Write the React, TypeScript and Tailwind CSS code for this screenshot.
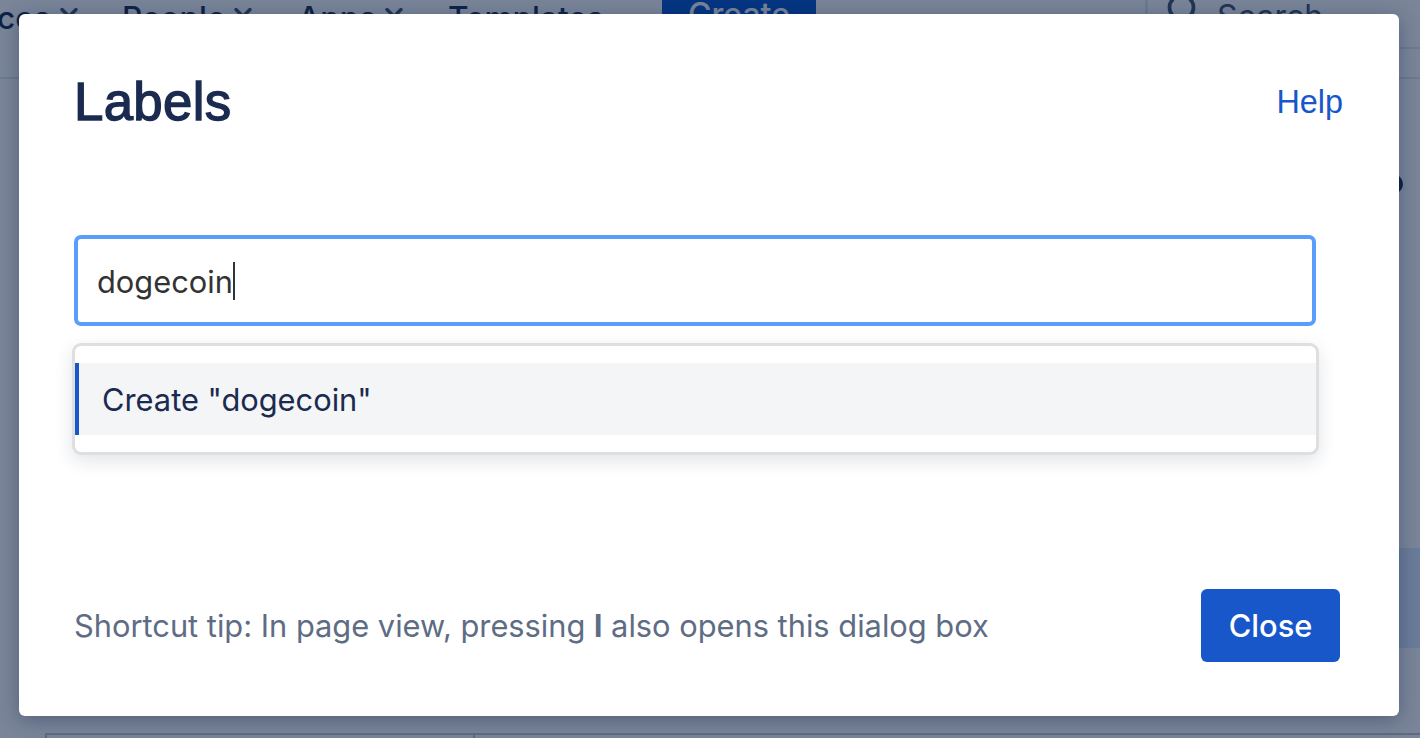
import React from 'react';
import { Search, ChevronDown } from 'lucide-react';

const inter = { fontFamily: 'Inter, sans-serif' };

function NavItem({ label, caret }: { label: string; caret?: boolean }) {
  return (
    <div className="flex items-start text-[#172b4d] text-[31.5px] leading-[40px] font-medium whitespace-nowrap">
      <span>{label}</span>
      {caret && <ChevronDown size={28} strokeWidth={3} className="text-[#42526e] mt-[1px] ml-[4px]" />}
    </div>
  );
}

// page that sits behind the dialog, only the edges are visible
function BackgroundPage() {
  return (
    <div className="h-[738px] overflow-hidden bg-white flex flex-col">
      <div className="h-[79px] shrink-0 flex items-start border-b-2 border-[#e4e6ea]">
        <div className="flex items-start w-[662px] -mt-[2px]">
          <div className="w-[125px] -ml-[3px]"><NavItem label="ces" caret /></div>
          <div className="w-[176px]"><NavItem label="People" caret /></div>
          <div className="w-[150px]"><NavItem label="Apps" caret /></div>
          <NavItem label="Templates" />
        </div>
        <div className="w-[154px] h-[14px] bg-[#0052cc] overflow-hidden text-center">
          <div className="text-white text-[32px] leading-[40px] font-medium -mt-[5px]">Create</div>
        </div>
        <div className="ml-[329px] flex-1 h-[49px] pl-[17px] border-l-[3px] border-b-2 border-[#e4e6ea] flex items-start gap-[16px] text-[#42526e] text-[32px] leading-[40px]">
          <Search size={36} strokeWidth={2.5} className="-mt-[9px]" />
          <span className="-mt-[3px]">Search</span>
        </div>
      </div>
      <div className="flex-1 flex justify-end">
        <div className="w-[37px]">
          <div className="mt-[95px] w-[20px] h-[20px] rounded-full bg-[#172b4d]" />
          <div className="mt-[354px] h-[100px] bg-[#deebff]" />
        </div>
      </div>
      <div className="h-[5px] ml-[45px] flex border-t-2 border-l-2 border-[#c1c7d0] shrink-0">
        <div className="w-[428px] border-r-2 border-[#c1c7d0]" />
      </div>
    </div>
  );
}

export default function App() {
  return (
    <div className="relative w-[1420px] h-[738px] overflow-hidden" style={inter}>
      <BackgroundPage />

      {/* Blanket */}
      <div className="absolute inset-0 bg-[#091e42]/[0.54]" />

      {/* Dialog */}
      <div className="absolute left-[19px] top-[14px] w-[1380px] h-[702px] bg-white rounded-[6px] shadow-[0_4px_20px_rgba(9,30,66,0.35)] flex flex-col">
        <div className="flex items-center justify-between pl-[55px] pr-[56px] pt-[56px] h-[120px] shrink-0">
          <h1 className="text-[52.8px] leading-[64px] font-normal tracking-[0.3px] [-webkit-text-stroke:1.4px_#1b2b50] text-[#1b2b50] font-['Liberation_Sans',sans-serif]">Labels</h1>
          <a className="text-[32.4px] leading-[40px] text-[#1857c9] font-['Liberation_Sans',sans-serif]">Help</a>
        </div>

        <div className="pl-[55px] pr-[83px] pt-[101px]">
          <div className="h-[91px] border-4 border-[#5a9efb] rounded-[7px] flex items-center pl-[19px] text-[30.8px] text-[#333333]">
            <span className="mt-[3px]">dogecoin</span>
            <span className="w-[2px] h-[38px] bg-[#333333]" />
          </div>
        </div>

        <div className="ml-[53px] mr-[80px] mt-[17px] h-[112px] border-[3px] border-[#dfdfdf] rounded-[9px] shadow-[0_6px_18px_rgba(9,30,66,0.12)] flex flex-col justify-center bg-white">
          <div className="h-[72px] bg-[#f4f5f7] border-l-[4px] border-[#1857c9] flex items-center pl-[23px] text-[30.8px] text-[#1b2b50]">
            <span className="mt-[3px]">Create "dogecoin"</span>
          </div>
        </div>

        <div className="flex-1 flex items-end justify-between pl-[55px] pr-[59px] pb-[54px]">
          <p className="text-[30.8px] leading-[73px] text-[#5e6c84]">
            Shortcut tip: In page view, pressing <b className="font-bold">l</b> also opens this dialog box
          </p>
          <button className="w-[139px] h-[73px] pt-[2px] bg-[#1857c9] rounded-[6px] text-white text-[30.8px] font-medium">Close</button>
        </div>
      </div>
    </div>
  );
}
